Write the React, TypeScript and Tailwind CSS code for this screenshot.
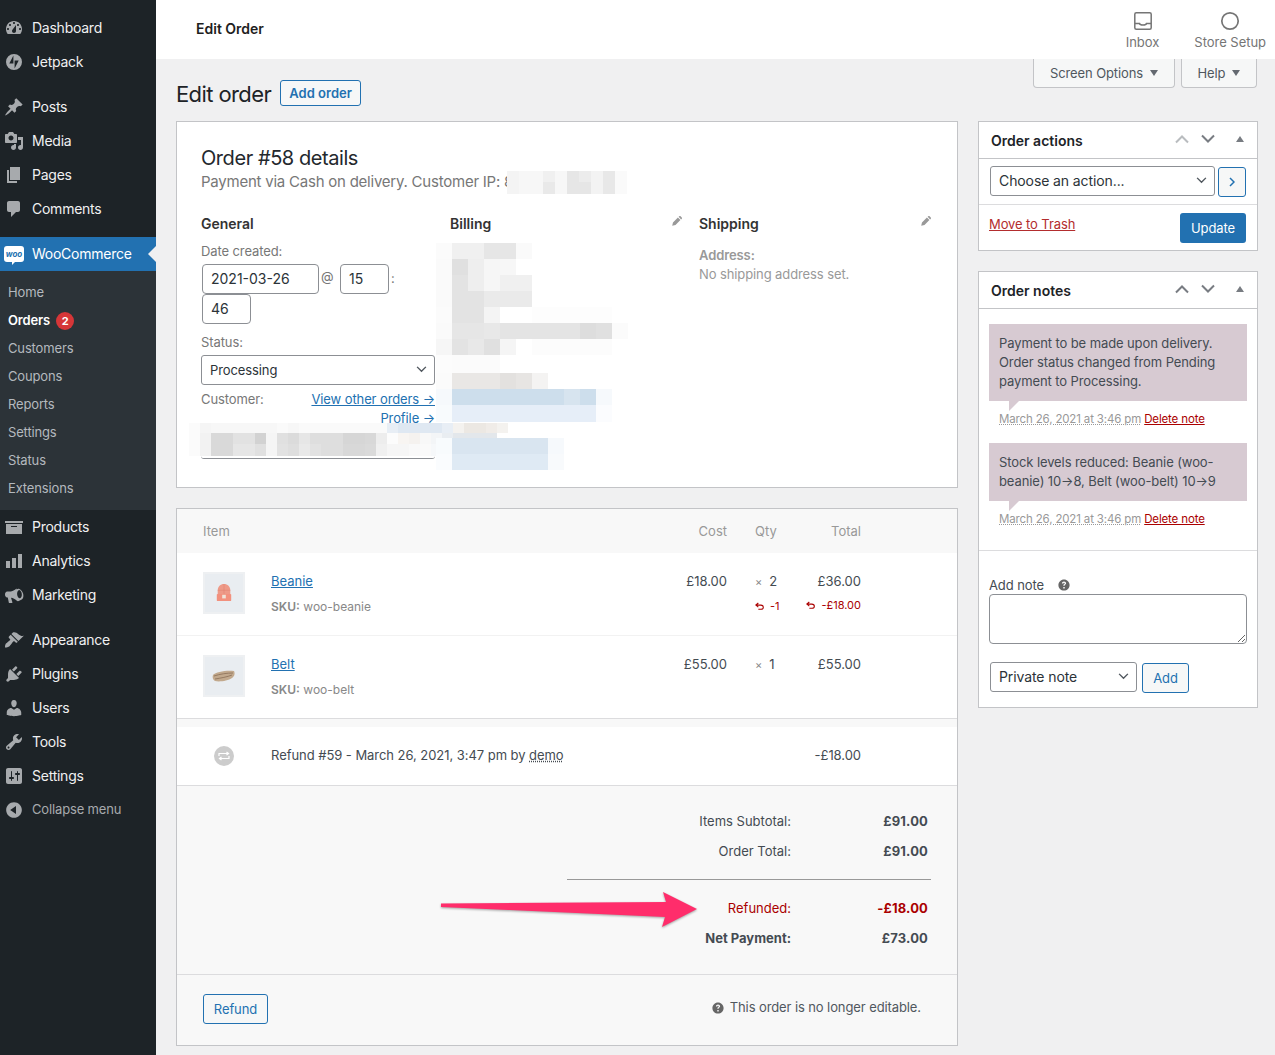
import type { ReactNode } from "react";

// dashicon style glyphs, 20x20 box
const glyphs: Record<string, string> = {
  dashboard:
    "M3.76 16h12.48c1.1-1.37 1.76-3.11 1.76-5 0-4.42-3.58-8-8-8s-8 3.58-8 8c0 1.89.66 3.63 1.76 5zM10 4c.55 0 1 .45 1 1s-.45 1-1 1-1-.45-1-1 .45-1 1-1zM6 6c.55 0 1 .45 1 1s-.45 1-1 1-1-.45-1-1 .45-1 1-1zm8 0c.55 0 1 .45 1 1s-.45 1-1 1-1-.45-1-1 .45-1 1-1zm-5.37 5.55L12 7v6c0 1.1-.9 2-2 2s-2-.9-2-2c0-.57.24-1.08.63-1.45zM4 10c.55 0 1 .45 1 1s-.45 1-1 1-1-.45-1-1 .45-1 1-1zm12 0c.55 0 1 .45 1 1s-.45 1-1 1-1-.45-1-1 .45-1 1-1z",
  jetpack: "M10 2a8 8 0 100 16 8 8 0 000-16zM9.4 11.4H5.3l4.1-8zM10.6 8.6h4.1l-4.1 8z",
  post: "M10.44 3.02l1.82-1.82 6.36 6.35-1.83 1.82c-1.05-.68-2.48-.57-3.41.36l-.75.75c-.92.93-1.04 2.35-.35 3.41l-1.83 1.82-2.41-2.41-2.8 2.79c-.42.42-3.38 2.71-3.8 2.29s1.86-3.39 2.28-3.81l2.79-2.79L4.1 9.36l1.83-1.82c1.05.69 2.48.57 3.4-.36l.75-.75c.93-.92 1.05-2.35.36-3.41z",
  media:
    "M13 11V4c0-.55-.45-1-1-1h-1.67L9 1H5L3.67 3H2c-.55 0-1 .45-1 1v7c0 .55.45 1 1 1h10c.55 0 1-.45 1-1zM7 4.5c1.38 0 2.5 1.12 2.5 2.5S8.38 9.5 7 9.5 4.5 8.38 4.5 7 5.62 4.5 7 4.5zM14 6h5v10.5c0 1.38-1.12 2.5-2.5 2.5S14 17.88 14 16.5s1.12-2.5 2.5-2.5c.17 0 .34.02.5.05V9h-3V6zm-4 8.05V13h2v3.5c0 1.38-1.12 2.5-2.5 2.5S7 17.88 7 16.5 8.12 14 9.5 14c.17 0 .34.02.5.05z",
  page: "M6 15V2h10v13H6zm-1 1h8v2H3V5h2v11z",
  comments: "M5 2h9c1.1 0 2 .9 2 2v7c0 1.1-.9 2-2 2h-2l-5 5v-5H5c-1.1 0-2-.9-2-2V4c0-1.1.9-2 2-2z",
  archive: "M19 4v2H1V4h18zM2 7h16v10H2V7zm11 3V9H7v1h6z",
  chart: "M2 10h4v7H2zM8 7h4v10H8zM14 3h4v14h-4z",
  megaphone:
    "M12.6 3.4c-2 2-5 3.2-7.6 3.2H3.2C1.9 6.6 1 8 1 9.6s.9 3 2.2 3h.6l1 4.8c0 .4.3.6.7.6h2.2c.5 0 .8-.4.7-.8L7 12.8c2.2.3 4 1.2 5.6 2.8 1 .9 1.9.6 2.6.2 1.1-.6 3.3-1.2 3.8-2.8.5-1.5.5-3.3 0-4.8-.6-1.9-2-3.7-3.6-4.3-.9-.3-1.9-.2-2.8.5zm2.7 1.6c1.3.5 2.3 2.1 2.5 3.9.2 1.9-.5 3.9-1.9 4.3-1.1.3-2.3-1.3-2.7-3.2-.4-2.1.4-4.7 2.1-5z",
  appearance:
    "M14.48 11.06L7.41 3.99l1.5-1.5c.5-.56 2.3-.47 3.51.32 1.21.8 1.43 1.28 2.91 2.1 1.18.64 2.45 1.26 4.45.85zm-.71.71L6.7 4.7 4.93 6.47c-.39.39-.39 1.02 0 1.41l1.06 1.06c.39.39.39 1.03 0 1.42-.6.6-1.43 1.11-2.21 1.69-.35.26-.7.53-1.01.84C1.43 13.23.91 15.5 1 17.5c2-.1 4.3-.5 5.7-2.8.3-.3.58-.66.84-1.01.58-.78 1.09-1.61 1.69-2.21.39-.39 1.03-.39 1.42 0l1.06 1.06c.39.39 1.02.39 1.41 0z",
  plugins:
    "M13.11 4.36L9.87 7.6 8 5.73l3.24-3.24c.35-.34 1.05-.2 1.56.32.52.51.66 1.21.31 1.55zm-8 1.77l.91-1.12 9.01 9.01-1.19.84c-.71.71-2.63 1.16-3.82 1.16H6.14L4.9 17.26c-.59.59-1.54.59-2.12 0-.59-.58-.59-1.53 0-2.12l1.24-1.24v-3.88c0-1.13.4-3.19 1.09-3.89zm7.26 3.97l3.24-3.24c.34-.35 1.04-.21 1.55.31.52.51.66 1.21.31 1.55l-3.24 3.25z",
  users:
    "M10 9.25c-2.27 0-2.73-3.44-2.73-3.44C7 4.02 7.82 2 9.97 2c2.16 0 2.98 2.02 2.71 3.81 0 0-.41 3.44-2.68 3.44zm0 2.57L12.72 10c2.39 0 4.52 2.33 4.52 4.53v2.49s-3.65 1.13-7.24 1.13c-3.65 0-7.24-1.13-7.24-1.13v-2.49c0-2.25 1.94-4.48 4.47-4.48z",
  tools:
    "M16.68 9.77c-1.34 1.34-3.3 1.67-4.95.99l-5.41 6.52c-.99.99-2.59.99-3.58 0s-.99-2.59 0-3.57l6.52-5.42c-.68-1.65-.35-3.61.99-4.95 1.28-1.28 3.12-1.62 4.72-1.06l-2.89 2.89 2.82 2.82 2.86-2.87c.53 1.58.18 3.39-1.08 4.65zM3.81 16.21c.4.39 1.04.39 1.43 0 .4-.4.4-1.04 0-1.43-.39-.4-1.03-.4-1.43 0-.39.39-.39 1.03 0 1.43z",
  settings:
    "M18 16V4c0-1.1-.9-2-2-2H4c-1.1 0-2 .9-2 2v12c0 1.1.9 2 2 2h12c1.1 0 2-.9 2-2zM8 11h1c.55 0 1 .45 1 1s-.45 1-1 1H8v1.5c0 .28-.22.5-.5.5s-.5-.22-.5-.5V13H6c-.55 0-1-.45-1-1s.45-1 1-1h1V5.5c0-.28.22-.5.5-.5s.5.22.5.5V11zm5-2h-1c-.55 0-1-.45-1-1s.45-1 1-1h1V5.5c0-.28.22-.5.5-.5s.5.22.5.5V7h1c.55 0 1 .45 1 1s-.45 1-1 1h-1v5.5c0 .28-.22.5-.5.5s-.5-.22-.5-.5V9z",
  collapse: "M10 2.16c4.33 0 7.84 3.51 7.84 7.84s-3.51 7.84-7.84 7.84S2.16 14.33 2.16 10 5.71 2.16 10 2.16zm2 11.72V6.12L6.18 9.97z",
  help: "M10 2c4.42 0 8 3.58 8 8s-3.58 8-8 8-8-3.58-8-8 3.58-8 8-8zm1 13v-2H9v2h2zm1.2-5.3c.5-.5.8-1.1.8-1.9 0-1.7-1.3-2.8-3-2.8-1.6 0-3 1.1-3 2.8h2c0-.6.4-1 1-1s1 .4 1 1c0 .9-2 1.1-2 3.2h2c0-1.2.7-1.5 1.2-2.3z",
  pencil: "M2 18l1.3-5.5L11.5 4.3l4.2 4.2-8.2 8.2zM12.7 3.1l1.1-1.1c.6-.6 1.5-.6 2.1 0l2.1 2.1c.6.6.6 1.5 0 2.1l-1.1 1.1z",
};

function Glyph({ name, className }: { name: string; className: string }) {
  return (
    <svg viewBox="0 0 20 20" className={className} fill="currentColor">
      <path fillRule="evenodd" d={glyphs[name]} />
    </svg>
  );
}

function MenuItem({ icon, label }: { icon: string; label: string }) {
  return (
    <div className="flex h-[34px] items-center pl-[4px] text-[14px] tracking-[-0.25px] text-[#f0f0f1]">
      <Glyph name={icon} className="h-[20px] w-[20px] text-[#a7aaad]" />
      <span className="mb-[2px] ml-[8px]">{label}</span>
    </div>
  );
}

function Sidebar() {
  const sub = ["Customers", "Coupons", "Reports", "Settings", "Status", "Extensions"];
  return (
    <aside className="h-full w-[156px] shrink-0 bg-[#1d2327] pt-[11px]">
      <MenuItem icon="dashboard" label="Dashboard" />
      <MenuItem icon="jetpack" label="Jetpack" />
      <div className="h-[11px]" />
      <MenuItem icon="post" label="Posts" />
      <MenuItem icon="media" label="Media" />
      <MenuItem icon="page" label="Pages" />
      <MenuItem icon="comments" label="Comments" />
      <div className="h-[11px]" />
      <div className="relative flex h-[34px] items-center bg-[#2271b1] pl-[4px] text-[14px] tracking-[-0.25px] text-white">
        <div className="relative flex h-[16px] w-[20px] items-center justify-center rounded-[3px] bg-white">
          <span className="text-[8px] leading-none font-bold tracking-normal text-[#2271b1] italic">woo</span>
          <div className="absolute -bottom-[3px] left-[8px] border-t-[3px] border-r-[3px] border-t-white border-r-transparent" />
        </div>
        <span className="mb-[2px] ml-[8px]">WooCommerce</span>
        <div className="absolute top-[9px] right-0 border-y-[8px] border-r-[8px] border-y-transparent border-r-[#f0f0f1]" />
      </div>
      <div className="bg-[#2c3338] pt-[8px] pb-[7px] text-[13px] tracking-[-0.15px] text-[#b4b9be]">
        <div className="flex h-[28px] items-center pl-[8px]">Home</div>
        <div className="flex h-[28px] items-center pl-[8px] font-semibold text-white">
          Orders
          <span className="ml-[6px] flex h-[18px] w-[18px] items-center justify-center rounded-full bg-[#d63638] text-[11px] font-bold">2</span>
        </div>
        {sub.map((s) => (
          <div key={s} className="flex h-[28px] items-center pl-[8px]">{s}</div>
        ))}
      </div>
      <MenuItem icon="archive" label="Products" />
      <MenuItem icon="chart" label="Analytics" />
      <MenuItem icon="megaphone" label="Marketing" />
      <div className="h-[11px]" />
      <MenuItem icon="appearance" label="Appearance" />
      <MenuItem icon="plugins" label="Plugins" />
      <MenuItem icon="users" label="Users" />
      <MenuItem icon="tools" label="Tools" />
      <MenuItem icon="settings" label="Settings" />
      <div className="flex h-[33px] items-center pl-[4px] text-[13px] tracking-[-0.15px] text-[#a7aaad]">
        <Glyph name="collapse" className="h-[20px] w-[20px]" />
        <span className="ml-[8px]">Collapse menu</span>
      </div>
    </aside>
  );
}

function TopBar() {
  return (
    <header className="flex h-[59px] items-start bg-white pr-[9px]">
      <div className="mt-[19px] ml-[40px] text-[14px] leading-[20px] font-semibold tracking-normal text-[#1e1e1e]">Edit Order</div>
      <div className="ml-auto flex gap-[35px] pt-[11px] text-[13px] leading-[16px] tracking-[-0.03px] text-[#757575]">
        <div className="flex flex-col items-center">
          <svg viewBox="0 0 20 20" className="h-[20px] w-[20px]" fill="none" stroke="#757575" strokeWidth="1.5">
            <rect x="1.8" y="1.8" width="16.4" height="16.4" rx="1.5" />
            <path d="M2 12.5h4.5c.5 2 6.5 2 7 0H18" />
          </svg>
          <span className="mt-[3px]">Inbox</span>
        </div>
        <div className="flex flex-col items-center">
          <svg viewBox="0 0 20 20" className="h-[20px] w-[20px]" fill="none" stroke="#757575" strokeWidth="1.7">
            <circle cx="10" cy="10" r="8.2" />
          </svg>
          <span className="mt-[3px]">Store Setup</span>
        </div>
      </div>
    </header>
  );
}

function MetaTab({ label, width }: { label: string; width: string }) {
  return (
    <div className={`flex h-[29px] items-center justify-center gap-[7px] rounded-b-[4px] border border-t-0 border-[#c3c4c7] bg-[#f6f7f7] pt-[2px] text-[13px] text-[#50575e] ${width}`}>
      {label}
      <span className="mb-[2px] border-x-[4.5px] border-t-[6px] border-x-transparent border-t-[#646970]" />
    </div>
  );
}

function Chevron({ up, light }: { up?: boolean; light?: boolean }) {
  return (
    <svg viewBox="0 0 16 10" className="h-[10px] w-[16px]" fill="none" stroke={light ? "#b9bcbf" : "#787c82"} strokeWidth="2">
      <path d={up ? "M2 8.5L8 2.5l6 6" : "M2 1.5l6 6 6-6"} />
    </svg>
  );
}

function BoxHeader({ title, lightUp }: { title: string; lightUp?: boolean }) {
  return (
    <div className="flex h-[37px] items-center border-b border-[#c3c4c7] pl-[12px]">
      <span className="text-[14px] font-semibold tracking-normal text-[#1d2327]">{title}</span>
      <div className="mb-[2px] ml-auto flex items-center gap-[10px] pr-[13px]">
        <Chevron up light={lightUp} />
        <Chevron />
        <span className="ml-[10px] border-x-[4px] border-b-[6px] border-x-transparent border-b-[#787c82]" />
      </div>
    </div>
  );
}

function Select({ value, className, padding = "pb-[2px]" }: { value: string; className: string; padding?: string }) {
  return (
    <div className={`relative ${className}`}>
      <select className={`h-full w-full appearance-none rounded-[3px] border border-[#8c8f94] bg-white pr-[24px] pl-[8px] text-[length:inherit] text-[#2c3338] ${padding}`} defaultValue={value}>
        <option>{value}</option>
      </select>
      <svg viewBox="0 0 12 8" className="pointer-events-none absolute top-[11px] right-[8px] h-[7px] w-[11px]" fill="none" stroke="#50575e" strokeWidth="1.6">
        <path d="M1 1l5 5 5-5" />
      </svg>
    </div>
  );
}

function TextInput({ value, className }: { value: string; className: string }) {
  return (
    <input
      readOnly
      value={value}
      className={`h-[30px] rounded-[4px] border border-[#8c8f94] bg-white px-[8px] pb-[2px] text-[14px] tracking-normal text-[#2c3338] ${className}`}
    />
  );
}

function Heading({ title, pencil }: { title: string; pencil?: boolean }) {
  return (
    <div className="flex items-start justify-between">
      <h3 className="text-[14px] leading-[20px] font-semibold tracking-normal text-[#333]">{title}</h3>
      {pencil && <Glyph name="pencil" className="mt-px h-[12px] w-[12px] text-[#999]" />}
    </div>
  );
}

// pixelated privacy blur: [x, y, cell width, cell height, colours]
const mosaic: [number, number, number, number, string[]][] = [
  [507, 171, 12, 11, ["f4f4f4", "f7f7f7", "f7f7f7", "f0f0f0", "f7f7f7", "e6e6e6", "ececec", "f3f3f3", "e8e8e8", "fafafa"]],
  [507, 182, 12, 12, ["f4f4f4", "f7f7f7", "f7f7f7", "e9e9e9", "f7f7f7", "e6e6e6", "e6e6e6", "f3f3f3", "e8e8e8", "fafafa"]],
  [436, 243, 16, 16, ["fbfbfb", "f0f0f0", "f0f0f0", "e6e6e6", "e6e6e6", "fafafa"]],
  [436, 259, 16, 16, ["fafafa", "e0e0e0", "eeeeee", "f6f6f6", "f7f7f7"]],
  [436, 275, 16, 16, ["fafafa", "e3e3e3", "eeeeee", "f6f6f6", "f0f0f0", "f0f0f0"]],
  [436, 291, 16, 16, ["fafafa", "e3e3e3", "e3e3e3", "eaeaea", "eaeaea", "eaeaea"]],
  [436, 307, 16, 16, ["fbfbfb", "e3e3e3", "e3e3e3", "f4f4f4", "ffffff", "ffffff", "fdfdfd", "fdfdfd", "fdfdfd", "fdfdfd", "fdfdfd"]],
  [436, 323, 16, 16, ["fafafa", "e6e6e6", "e6e6e6", "e8e8e8", "e4e4e4", "e4e4e4", "e4e4e4", "e4e4e4", "e4e4e4", "dddddd", "e0e0e0", "fbfbfb"]],
  [436, 339, 16, 16, ["f6f6f6", "e3e3e3", "e8e8e8", "e0e0e0", "f5f5f5", "ffffff", "fcfcfc", "fcfcfc", "fcfcfc", "fcfcfc", "fcfcfc"]],
  [436, 355, 16, 18, ["fcfcfc", "fbfbfb", "fbfbfb", "fbfbfb"]],
  [436, 373, 16, 16, ["fbfbfb", "e9e7e5", "e9e7e5", "e9e7e5", "e3e1df", "e7e5e3", "f4f3f2"]],
  [436, 389, 16, 16, ["f6f9fc", "cddeec", "cddeec", "cddeec", "cddeec", "cddeec", "cddeec", "cddeec", "d7e4ef", "cddeec", "f6f9fc"]],
  [436, 405, 16, 17, ["f8fbfd", "e6eef8", "e6eef8", "e6eef8", "e6eef8", "e6eef8", "e6eef8", "e6eef8", "e6eef8", "e6eef8", "fbfcfe"]],
  [189, 423, 11, 10, ["fbfbfb", "f5f5f5", "f7f7f7", "f7f7f7", "f7f7f7", "f7f7f7", "f7f7f7", "f7f7f7", "fafafa", "f7f7f7", "fafafa", "fafafa", "fafafa", "fafafa", "fafafa", "fafafa", "fafafa", "fafafa", "e8eef5", "dfe8f2", "dfe8f2", "dfe8f2", "dfe8f2", "e8eef5", "f4f2ef", "ece8e3", "ece8e3", "f0ece8", "f4f2ef"]],
  [189, 433, 11, 11, ["fbfbfb", "f2f2f2", "d9d9d9", "d9d9d9", "e2e2e2", "e2e2e2", "d2d2d2", "f5f5f5", "e0e0e0", "dbdbdb", "e6e6e6", "dedede", "dedede", "dedede", "d6d6d6", "d6d6d6", "d8d8d8", "ededed", "fcfcfc", "f8f5f2", "f5f2ef", "f8f8f8", "f3f5f7", "e9edf1", "e3e7eb", "e3e7eb", "e3e7eb", "e3e7eb"]],
  [189, 444, 11, 12, ["fbfbfb", "f2f2f2", "d9d9d9", "d9d9d9", "e6e6e6", "e6e6e6", "e0e0e0", "f5f5f5", "e2e2e2", "dedede", "e9e9e9", "e2e2e2", "dedede", "dedede", "d8d8d8", "d8d8d8", "dadada", "f0f0f0", "f6f6f6", "f6f6f6", "f9f9f9", "fafafa", "f6f8fa"]],
  [436, 438, 16, 16, ["f8fbfd", "d9e5f0", "d9e5f0", "d9e5f0", "d9e5f0", "d9e5f0", "d9e5f0", "f6f9fc"]],
  [436, 454, 16, 16, ["fafcfe", "dfeaf4", "dfeaf4", "dfeaf4", "dfeaf4", "dfeaf4", "dfeaf4", "f8fafc"]],
];

function OrderData() {
  return (
    <section className="relative h-[367px] border border-[#c3c4c7] bg-white pt-[22px] pl-[24px]">
      <h2 className="text-[20px] leading-[28px] tracking-[-0.44px] text-[#23282d]">Order #58 details</h2>
      <p className="text-[15px] leading-[20px] tracking-[-0.23px] text-[#777]">Payment via Cash on delivery. Customer IP: 8</p>
      <div className="mt-[22px] flex">
        <div className="w-[234px]">
          <Heading title="General" />
          <div className="mt-[9px] text-[13px] leading-[16px] text-[#777]">Date created:</div>
          <div className="mt-[5px] flex flex-wrap items-start pl-px text-[13px] text-[#777]">
            <TextInput value="2021-03-26" className="w-[117px]" />
            <span className="w-[21px] pl-[2px] leading-[24px]">@</span>
            <TextInput value="15" className="w-[49px]" />
            <span className="pl-[2px] leading-[28px]">:</span>
            <TextInput value="46" className="w-[49px]" />
          </div>
          <div className="mt-[10px] text-[13px] leading-[16px] text-[#777]">Status:</div>
          <Select value="Processing" padding="pt-[1px]" className="mt-[5px] h-[30px] w-[234px] text-[13px]" />
          <div className="mt-[5px] flex justify-between text-[13px] leading-[19px]">
            <span className="text-[#777]">Customer:</span>
            <div className="text-right text-[#2271b1]">
              <div className="underline">View other orders →</div>
              <div>Profile →</div>
            </div>
          </div>
          <div className="mt-[1px] h-[30px] rounded-[3px] border-b border-[#8c8f94]" />
        </div>
        <div className="ml-[15px] w-[233px]">
          <Heading title="Billing" pencil />
        </div>
        <div className="ml-[16px] w-[233px]">
          <Heading title="Shipping" pencil />
          <div className="mt-[12px] text-[13px] leading-[19px] text-[#999]">
            <div className="font-semibold">Address:</div>
            <div>No shipping address set.</div>
          </div>
        </div>
      </div>
      <svg viewBox="177 122 780 365" className="pointer-events-none absolute top-0 left-0 h-full w-full">
        {mosaic.map(([x, y, w, h, cells]) =>
          cells.map((c, i) => <rect key={`${x}-${y}-${i}`} x={x + i * w} y={y} width={w} height={h} fill={`#${c}`} />)
        )}
      </svg>
    </section>
  );
}

function Undo({ className }: { className: string }) {
  return (
    <svg viewBox="0 0 12 10" className={className} fill="none" stroke="#a00" strokeWidth="1.3">
      <path d="M4 .8L1 3.3l3 2.4M1.5 3.3h5.5c4 0 4 5 0 5H4" />
    </svg>
  );
}

function Thumb({ children }: { children: ReactNode }) {
  return (
    <div className="mt-[19px] flex h-[42px] w-[42px] shrink-0 items-center justify-center border-2 border-[#eef0f2] bg-[#e9edf1]">
      {children}
    </div>
  );
}

function ItemRow({ thumb, name, sku, cost, qty, total, refund, border }: { thumb: ReactNode; name: string; sku: string; cost: string; qty: string; total: string; refund?: boolean; border: string }) {
  return (
    <div className={`grid h-[83px] grid-cols-[420px_104px_60px_74px] border-b pl-[26px] text-[13px] leading-[20px] tracking-normal text-[#444b52] ${border}`}>
      <div className="flex">
        <Thumb>{thumb}</Thumb>
        <div className="ml-[26px] pt-[18px]">
          <a className="text-[#2271b1] underline">{name}</a>
          <div className="mt-[8px] text-[12px] leading-[16px] text-[#888]">
            <b className="font-semibold">SKU:</b> {sku}
          </div>
        </div>
      </div>
      <div className="pt-[18px] text-right">{cost}</div>
      <div className="pt-[18px] pl-[28px]">
        <span className="mr-[7px] text-[11px] text-[#888]">×</span>{qty}
        {refund && (
          <div className="mt-[4px] flex items-center gap-[5px] text-[11px] text-[#a00]">
            <Undo className="h-[9px] w-[10px]" />-1
          </div>
        )}
      </div>
      <div className="pt-[18px] text-right">
        {total}
        {refund && (
          <div className="mt-[4px] flex items-center justify-end gap-[5px] text-[11px] text-[#a00]">
            <Undo className="h-[9px] w-[10px]" />-£18.00
          </div>
        )}
      </div>
    </div>
  );
}

function TotalRow({ label, value, className }: { label: string; value: string; className?: string }) {
  return (
    <div className={`flex h-[30px] items-center justify-end pt-[2px] pr-[29px] text-[13px] tracking-normal ${className ?? "text-[#444b52]"}`}>
      <span>{label}</span>
      <span className="w-[137px] text-right font-bold tracking-[0.15px]">{value}</span>
    </div>
  );
}

function OrderItems() {
  return (
    <section className="relative mt-[20px] h-[538px] border border-[#c3c4c7] bg-[#f8f8f8]">
      <div className="grid h-[44px] grid-cols-[420px_104px_60px_74px] items-center pt-[2px] pl-[26px] text-[13px] tracking-normal text-[#999]">
        <div>Item</div>
        <div className="text-right">Cost</div>
        <div className="pl-[28px]">Qty</div>
        <div className="text-right">Total</div>
      </div>
      <div className="bg-white">
        <ItemRow
          name="Beanie"
          sku="woo-beanie"
          cost="£18.00"
          qty="2"
          total="£36.00"
          refund
          border="border-[#f2f2f2]"
          thumb={
            <svg viewBox="0 0 20 22" className="h-[20px] w-[18px]">
              <path d="M3 12V8c0-4 3-7 7-7s7 3 7 7v4z" fill="#ee9a88" />
              <rect x="2" y="12" width="16" height="8" rx="1" fill="#f2917e" />
              <rect x="8" y="13" width="4" height="4" fill="#efe3d8" />
              <path d="M10 1v11M3 8h14" stroke="#dd7f6e" strokeWidth=".5" />
            </svg>
          }
        />
        <ItemRow
          name="Belt"
          sku="woo-belt"
          cost="£55.00"
          qty="1"
          total="£55.00"
          border="border-[#dcdcde]"
          thumb={
            <svg viewBox="0 0 24 14" className="h-[14px] w-[24px]">
              <path d="M1 6c3-3 13-5 21-4 1 2 1 5-2 7-4 3-13 4-17 3C1 11 0 8 1 6z" fill="#c2a98d" />
              <path d="M2 7c6-2 13-3 19-3M3 10c6-1 12-2 17-4" stroke="#8a6f57" strokeWidth=".8" fill="none" />
            </svg>
          }
        />
      </div>
      <div className="mt-[8px] flex h-[59px] items-center border-b border-[#dcdcde] bg-white pl-[37px] text-[13px] tracking-[-0.05px] text-[#444b52]">
        <div className="flex h-[20px] w-[20px] items-center justify-center rounded-full bg-[#ccc]">
          <svg viewBox="0 0 12 10" className="h-[10px] w-[12px]" fill="none" stroke="#fff" strokeWidth="1.2">
            <path d="M1 5V2.5h9M8.5 1L10.5 2.5 8.5 4M11 5v2.5H2M3.5 9L1.5 7.5 3.5 6" />
          </svg>
        </div>
        <div className="ml-[37px] w-[524px]">
          Refund #59 - March 26, 2021, 3:47 pm by <abbr className="underline decoration-dotted">demo</abbr>
        </div>
        <div className="w-[66px] text-right">-£18.00</div>
      </div>
      <div className="relative h-[189px] border-b border-[#dcdcde] pt-[20px]">
        <TotalRow label="Items Subtotal:" value="£91.00" />
        <TotalRow label="Order Total:" value="£91.00" />
        <div className="mt-[13px] mr-[26px] ml-auto h-px w-[364px] bg-[#999]" />
        <div className="h-[13px]" />
        <TotalRow label="Refunded:" value="-£18.00" className="text-[#a00]" />
        <TotalRow label="Net Payment:" value="£73.00" className="text-[#444b52] [&>span:first-child]:font-bold" />
        <svg viewBox="0 0 270 45" className="absolute top-[104px] left-[260px] h-[45px] w-[270px] drop-shadow-[0_1px_1px_rgba(0,0,0,.35)]">
          <path d="M4 13.5L229 12 226 2 260 19 225 37 228 27 4 17z" fill="#ff2d6b" />
        </svg>
      </div>
      <div className="flex items-start justify-between pt-[19px] pr-[36px] pl-[26px] text-[13px]">
        <button className="h-[30px] w-[65px] rounded-[3px] border border-[#2271b1] bg-[#f6f7f7] pt-[2px] text-[#2271b1]">Refund</button>
        <div className="mt-[4px] flex items-center gap-[5px] text-[#50575e]">
          <Glyph name="help" className="h-[14px] w-[14px] text-[#666]" />
          This order is no longer editable.
        </div>
      </div>
    </section>
  );
}

function Note({ children }: { children: ReactNode }) {
  return (
    <div className="mb-[16px]">
      <div className="relative bg-[#d7cad2] px-[10px] py-[10px] text-[13px] leading-[19px] text-[#444b52]">
        {children}
        <div className="absolute -bottom-[10px] left-[20px] border-t-[10px] border-r-[10px] border-t-[#d7cad2] border-r-transparent" />
      </div>
      <div className="mt-[10px] pl-[10px] text-[11.5px] leading-[16px] tracking-[-0.15px]">
        <abbr className="text-[#999] underline decoration-dotted">March 26, 2021 at 3:46 pm</abbr>{" "}
        <a className="text-[#a00] underline">Delete note</a>
      </div>
    </div>
  );
}

function SideBoxes() {
  return (
    <div className="w-[280px] shrink-0">
      <section className="h-[130px] border border-[#c3c4c7] bg-white">
        <BoxHeader title="Order actions" lightUp />
        <div className="flex h-[46px] gap-[3px] border-b border-[#dcdcde] pt-[7px] pl-[11px]">
          <Select value="Choose an action..." className="h-[30px] w-[225px] text-[14px]" />
          <button className="mt-px flex h-[30px] w-[28px] items-center justify-center rounded-[3px] border border-[#2271b1] bg-[#f6f7f7]">
            <svg viewBox="0 0 6 10" className="h-[10px] w-[6px]" fill="none" stroke="#2271b1" strokeWidth="1.5">
              <path d="M1 1l4 4-4 4" />
            </svg>
          </button>
        </div>
        <div className="flex items-start justify-between pt-[8px] pr-[11px] pl-[10px]">
          <a className="mt-[1px] text-[13px] leading-[20px] text-[#b32d2e] underline">Move to Trash</a>
          <button className="h-[30px] w-[66px] rounded-[3px] bg-[#2271b1] pt-px text-[13px] text-white">Update</button>
        </div>
      </section>
      <section className="mt-[20px] h-[437px] border border-[#c3c4c7] bg-white">
        <BoxHeader title="Order notes" />
        <div className="h-[242px] border-b border-[#dcdcde] px-[10px] pt-[15px]">
          <Note>Payment to be made upon delivery. Order status changed from Pending payment to Processing.</Note>
          <Note>Stock levels reduced: Beanie (woo-beanie) 10→8, Belt (woo-belt) 10→9</Note>
        </div>
        <div className="px-[10px]">
          <div className="mt-[26px] flex items-center text-[13px] leading-[16px] text-[#444b52]">
            Add note
            <Glyph name="help" className="ml-[13px] h-[14px] w-[14px] text-[#666]" />
          </div>
          <textarea className="mt-px block h-[50px] w-[258px] rounded-[4px] border border-[#8c8f94] bg-white" />
          <div className="mt-[18px] flex gap-[5px] pl-px">
            <Select value="Private note" className="h-[30px] w-[147px] text-[14px]" />
            <button className="mt-px h-[30px] w-[47px] rounded-[3px] border border-[#2271b1] bg-[#f6f7f7] pt-px text-[13px] text-[#2271b1]">Add</button>
          </div>
        </div>
      </section>
    </div>
  );
}

export default function App() {
  return (
    <div className="flex h-[1055px] overflow-hidden bg-[#f0f0f1] font-['Inter','Liberation_Sans',sans-serif] tracking-[-0.1px]">
      <Sidebar />
      <main className="min-w-0 flex-1">
        <TopBar />
        <div className="pr-[17px] pl-[20px]">
          <div className="flex justify-end gap-[6px] pr-px">
            <MetaTab label="Screen Options" width="w-[142px]" />
            <MetaTab label="Help" width="w-[76px]" />
          </div>
          <div className="-mt-[8px] flex h-[26px] items-center">
            <h1 className="mt-px text-[22px] leading-[26px] tracking-[-0.6px] text-[#1d2327]">Edit order</h1>
            <button className="ml-[9px] h-[26px] w-[81px] rounded-[3px] border border-[#2271b1] bg-[#f6f7f7] pt-px text-[13px] font-semibold tracking-normal text-[#2271b1]">Add order</button>
          </div>
          <div className="mt-[15px] flex gap-[20px]">
            <div className="w-[782px] shrink-0">
              <OrderData />
              <OrderItems />
            </div>
            <SideBoxes />
          </div>
        </div>
      </main>
    </div>
  );
}
